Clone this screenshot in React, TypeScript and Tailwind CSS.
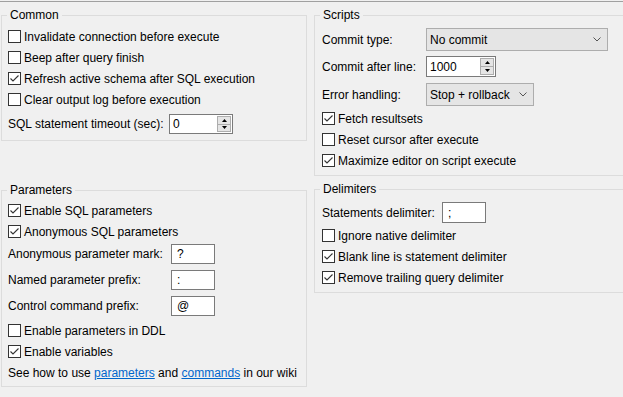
import React from 'react';

const font = { fontFamily: '"Liberation Sans", "Noto Sans", sans-serif' };

function Check({ checked, label }: { checked?: boolean; label: string }) {
    return (
        <div className="flex h-[21px] items-center">
            <span className="flex h-[13px] w-[13px] shrink-0 items-center justify-center border border-[#333333] bg-white">
                {checked && (
                    <svg width="11" height="11" viewBox="0 0 11 11">
                        <polyline points="1.5,5.5 4,8 9.5,2.5" fill="none" stroke="#333333" strokeWidth="1.1" />
                    </svg>
                )}
            </span>
            <span className="ml-[3px] whitespace-nowrap">{label}</span>
        </div>
    );
}

function Spin({ value, w, h }: { value: string; w: string; h: string }) {
    return (
        <div className={`flex items-stretch border border-[#7a7a7a] bg-white ${w} ${h}`}>
            <span className="flex flex-1 items-center pl-[3px]">{value}</span>
            <div className="my-px mr-px flex w-[14px] flex-col">
                <span className="flex flex-1 items-center justify-center border border-[#adadad] bg-[#e5e5e5]">
                    <svg width="5" height="3" viewBox="0 0 5 3"><polygon points="2.5,0 5,3 0,3" fill="#000" /></svg>
                </span>
                <span className="-mt-px flex flex-1 items-center justify-center border border-[#adadad] bg-[#e5e5e5]">
                    <svg width="5" height="3" viewBox="0 0 5 3"><polygon points="0,0 5,0 2.5,3" fill="#000" /></svg>
                </span>
            </div>
        </div>
    );
}

function Combo({ value, w }: { value: string; w: string }) {
    return (
        <div className={`flex h-[23px] items-center justify-between border border-[#adadad] bg-[#e5e5e5] pl-[3px] pr-[6px] ${w}`}>
            <span className="whitespace-nowrap">{value}</span>
            <svg width="8" height="5" viewBox="0 0 8 5">
                <polyline points="0.5,0.5 4,4 7.5,0.5" fill="none" stroke="#555" strokeWidth="1" />
            </svg>
        </div>
    );
}

function TextBox({ value, w, h }: { value: string; w: string; h: string }) {
    return (
        <div className={`flex items-center border border-[#7a7a7a] bg-white pl-[5px] ${w} ${h}`}>{value}</div>
    );
}

export default function App() {
    return (
        <div className="h-[397px] w-[623px] overflow-hidden bg-[#f0f0f0] text-[12px] leading-[16px] text-black" style={font}>
            <div className="mt-px h-px bg-[#a0a0a0]" />

            <div className="mt-[5px] grid grid-cols-[306px_330px] items-start gap-x-[7px] gap-y-[5px] pl-px">
                {/* Common */}
                <fieldset className="min-w-0 border border-[#dcdcdc] px-[6px] pb-[6px] pt-[3px]">
                    <legend className="-ml-px px-[3px] leading-[16px]">Common</legend>
                    <Check label="Invalidate connection before execute" />
                    <Check label="Beep after query finish" />
                    <Check checked label="Refresh active schema after SQL execution" />
                    <Check label="Clear output log before execution" />
                    <div className="mt-[4px] flex items-center">
                        <span className="w-[161px] whitespace-nowrap">SQL statement timeout (sec):</span>
                        <Spin value="0" w="w-[64px]" h="h-[20px]" />
                    </div>
                </fieldset>

                {/* Scripts */}
                <fieldset className="min-w-0 border border-[#dcdcdc] pb-[4px] pl-[7px] pt-[5px]">
                    <legend className="-ml-[2px] px-[3px] leading-[16px]">Scripts</legend>
                    <div className="flex items-center">
                        <span className="w-[104px] whitespace-nowrap">Commit type:</span>
                        <Combo value="No commit" w="w-[182px]" />
                    </div>
                    <div className="mt-[5px] flex items-center">
                        <span className="w-[104px] whitespace-nowrap">Commit after line:</span>
                        <Spin value="1000" w="w-[70px]" h="h-[21px]" />
                    </div>
                    <div className="mt-[6px] flex items-center">
                        <span className="w-[104px] whitespace-nowrap">Error handling:</span>
                        <Combo value="Stop + rollback" w="w-[108px]" />
                    </div>
                    <div className="mt-[2px]">
                        <Check checked label="Fetch resultsets" />
                        <Check label="Reset cursor after execute" />
                        <Check checked label="Maximize editor on script execute" />
                    </div>
                </fieldset>

                {/* Parameters */}
                <fieldset className="mt-px min-w-0 border border-[#dcdcdc] px-[6px] pb-[3px] pt-[2px]">
                    <legend className="-ml-px px-[3px] leading-[16px]">Parameters</legend>
                    <Check checked label="Enable SQL parameters" />
                    <Check checked label="Anonymous SQL parameters" />
                    <div className="mt-[2px] flex flex-col gap-[6px]">
                        <div className="flex items-center">
                            <span className="w-[163px] whitespace-nowrap">Anonymous parameter mark:</span>
                            <TextBox value="?" w="w-[44px]" h="h-[20px]" />
                        </div>
                        <div className="flex items-center">
                            <span className="w-[163px] whitespace-nowrap">Named parameter prefix:</span>
                            <TextBox value=":" w="w-[44px]" h="h-[20px]" />
                        </div>
                        <div className="flex items-center">
                            <span className="w-[163px] whitespace-nowrap">Control command prefix:</span>
                            <TextBox value="@" w="w-[44px]" h="h-[20px]" />
                        </div>
                    </div>
                    <div className="mt-[4px]">
                        <Check label="Enable parameters in DDL" />
                        <Check checked label="Enable variables" />
                    </div>
                    <div className="flex h-[21px] items-center whitespace-nowrap">
                        See how to use&nbsp;<a className="text-[#0066cc] underline">parameters</a>&nbsp;and&nbsp;
                        <a className="text-[#0066cc] underline">commands</a>&nbsp;in our wiki
                    </div>
                </fieldset>

                {/* Delimiters */}
                <fieldset className="min-w-0 border border-[#dcdcdc] pb-[4px] pl-[7px] pt-[5px]">
                    <legend className="-ml-[2px] px-[3px] leading-[16px]">Delimiters</legend>
                    <div className="flex items-center">
                        <span className="w-[120px] whitespace-nowrap">Statements delimiter:</span>
                        <TextBox value=";" w="w-[44px]" h="h-[21px]" />
                    </div>
                    <div className="mt-[2px]">
                        <Check label="Ignore native delimiter" />
                        <Check checked label="Blank line is statement delimiter" />
                        <Check checked label="Remove trailing query delimiter" />
                    </div>
                </fieldset>
            </div>
        </div>
    );
}
